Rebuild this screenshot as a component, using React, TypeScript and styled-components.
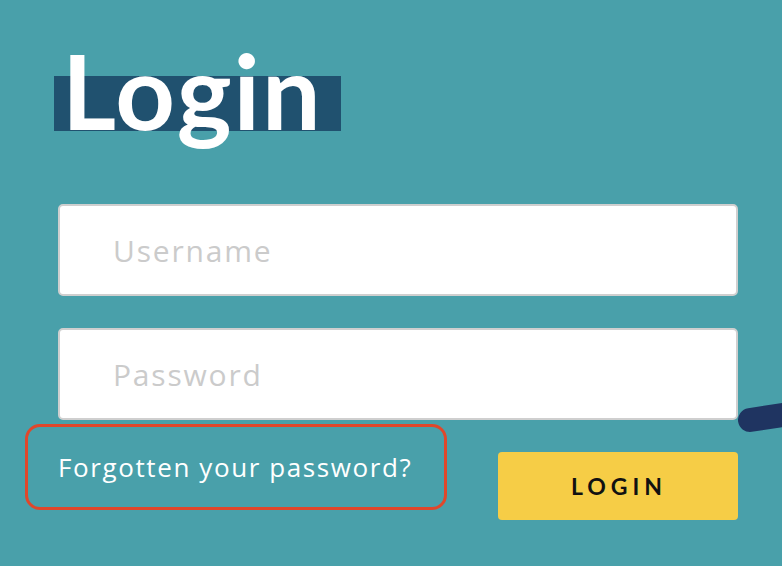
import React from 'react';
import styled, { createGlobalStyle } from 'styled-components';

const GlobalStyle = createGlobalStyle`
  html, body { margin: 0; padding: 0; }
  body { background: #49a0aa; font-family: "Open Sans", Lato, sans-serif; }
`

const Page = styled.div`
  position: relative;
  width: 782px;
  height: 566px;
  overflow: hidden;
  background: #49a0aa;
`

const Form = styled.form`
  width: 680px;
  margin-left: 58px;
  padding-top: 40px;
  display: flex;
  flex-direction: column;
`

const Title = styled.h1`
  margin: 0 0 0 -4px;
  align-self: flex-start;
  padding: 0 18px 0 8px;
  font-family: Lato, sans-serif;
  font-weight: 700;
  font-size: 104px;
  line-height: 100px;
  letter-spacing: 2px;
  color: #fff;
  background: linear-gradient(to bottom, transparent 36%, #20516f 36%, #20516f 91%, transparent 91%);
`

const Field = styled.input`
  box-sizing: border-box;
  width: 680px;
  height: 92px;
  margin-top: ${p => p.$top}px;
  padding: 0 0 0 53px;
  border: 2px solid #cfcfcf;
  border-radius: 5px;
  background: #fff;
  font-family: "Open Sans", sans-serif;
  font-size: 30px;
  letter-spacing: 1.8px;
  color: #444;
  outline: none;
  &::placeholder { color: #cbcbcb; }
`

const Row = styled.div`
  display: flex;
  justify-content: space-between;
  align-items: flex-start;
  margin-top: 4px;
`

const Forgot = styled.a`
  box-sizing: border-box;
  display: flex;
  align-items: center;
  width: 422px;
  height: 86px;
  margin-left: -33px;
  padding-left: 30px;
  border: 3.5px solid #e0472b;
  border-radius: 15px;
  font-family: "Open Sans", sans-serif;
  font-size: 26px;
  letter-spacing: 1.6px;
  color: #fff;
  text-decoration: none;
`

const LoginButton = styled.button`
  width: 240px;
  height: 68px;
  margin-top: 28px;
  border: none;
  border-radius: 4px;
  background: #f6cd46;
  font-family: Lato, sans-serif;
  font-weight: 700;
  font-size: 23px;
  letter-spacing: 5px;
  padding-left: 8px;
  color: #111;
`

const Blob = styled.svg`
  position: absolute;
  left: 738px;
  top: 400px;
`

function App() {
    return (
        <>
            <GlobalStyle/>
            <Page>
                <Form onSubmit={e => e.preventDefault()}>
                    <Title>Login</Title>
                    <Field $top={64} placeholder="Username"/>
                    <Field $top={32} type="password" placeholder="Password"/>
                    <Row>
                        <Forgot href="#">Forgotten your password?</Forgot>
                        <LoginButton type="submit">LOGIN</LoginButton>
                    </Row>
                </Form>
                <Blob width="44" height="36" viewBox="0 0 44 36">
                    <line x1="12" y1="20" x2="64" y2="12" stroke="#1f3461" strokeWidth="24" strokeLinecap="round"/>
                </Blob>
            </Page>
        </>
    );
}

export default App;
